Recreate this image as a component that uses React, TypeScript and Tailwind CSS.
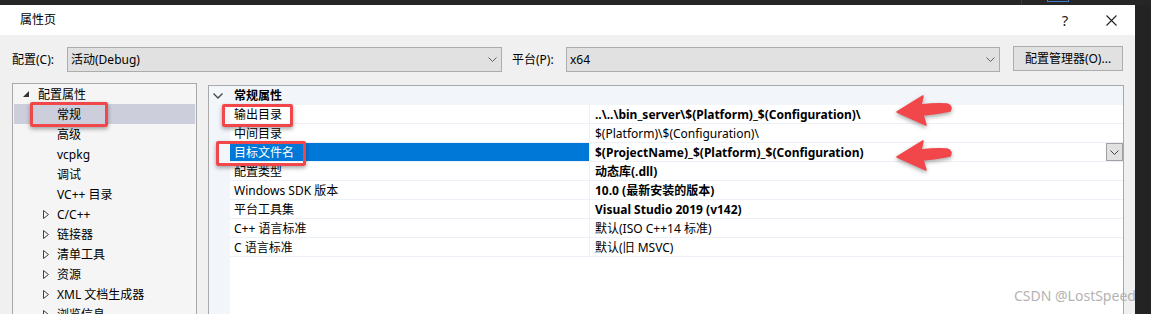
import React from "react";

const Chevron = ({ className = "" }: { className?: string }) => (
  <svg width="9" height="5" viewBox="0 0 9 5" className={className}>
    <polyline points="0.5,0.5 4.5,4.5 8.5,0.5" fill="none" stroke="#606060" strokeWidth="1" />
  </svg>
);

const Expander = () => (
  <svg width="6" height="9" viewBox="0 0 6 9" className="shrink-0">
    <polygon points="0.5,0.5 5.5,4.5 0.5,8.5" fill="none" stroke="#404040" strokeWidth="1" />
  </svg>
);

const RedArrow = ({ className }: { className: string }) => (
  <svg width="58" height="32" viewBox="0 0 58 32" className={className}>
    <path
      d="M1,17 L27,1 L25,10 Q40,8 51,9 Q57,11 54,16 Q40,19 27,20 L30,30 Z"
      fill="#f2474a"
      stroke="#f2474a"
      strokeWidth="1.5"
      strokeLinejoin="round"
    />
  </svg>
);

const treeChildren: { label: string; expand: boolean; selected?: boolean }[] = [
  { label: "常规", expand: false, selected: true },
  { label: "高级", expand: false },
  { label: "vcpkg", expand: false },
  { label: "调试", expand: false },
  { label: "VC++ 目录", expand: false },
  { label: "C/C++", expand: true },
  { label: "链接器", expand: true },
  { label: "清单工具", expand: true },
  { label: "资源", expand: true },
  { label: "XML 文档生成器", expand: true },
  { label: "浏览信息", expand: true },
];

const props: { name: string; value: string; bold: boolean; selected?: boolean }[] = [
  { name: "输出目录", value: "..\\..\\bin_server\\$(Platform)_$(Configuration)\\", bold: true },
  { name: "中间目录", value: "$(Platform)\\$(Configuration)\\", bold: false },
  { name: "目标文件名", value: "$(ProjectName)_$(Platform)_$(Configuration)", bold: true, selected: true },
  { name: "配置类型", value: "动态库(.dll)", bold: true },
  { name: "Windows SDK 版本", value: "10.0 (最新安装的版本)", bold: true },
  { name: "平台工具集", value: "Visual Studio 2019 (v142)", bold: true },
  { name: "C++ 语言标准", value: "默认(ISO C++14 标准)", bold: false },
  { name: "C 语言标准", value: "默认(旧 MSVC)", bold: false },
];

export default function App() {
  return (
    <div className="relative w-[1151px] h-[314px] overflow-hidden bg-[#242424] font-['Noto_Sans','Noto_Sans_CJK_SC',sans-serif] text-[12px] text-black leading-none">
      {/* top dark strip */}
      <div className="relative h-[5px] bg-[#262626]">
        <div className="absolute left-[1021px] top-0 h-[5px] w-px bg-[#3a3a3a]" />
        <div className="absolute left-[1047px] top-[-1px] h-[3px] w-[22px] border border-[#3d7cc9]" />
      </div>
      <div className="flex h-[309px]">
        {/* dialog */}
        <div className="relative w-[1135px] h-full flex flex-col bg-[#f0f0f0] overflow-hidden">
          {/* title bar */}
          <div className="h-[30px] bg-white flex items-center shrink-0">
            <span className="ml-[20px]">属性页</span>
            <span className="ml-auto text-[15px] text-[#222] w-[10px] text-center">?</span>
            <svg width="11" height="11" viewBox="0 0 11 11" className="ml-[36px] mr-[18px]">
              <path d="M0.5,0.5 L10.5,10.5 M10.5,0.5 L0.5,10.5" stroke="#222" strokeWidth="1.1" />
            </svg>
          </div>

          {/* config row */}
          <div className="h-[48px] shrink-0 flex items-start pt-[12px] pl-[12px]">
            <div className="w-[55px] h-[25px] flex items-center pt-[1px]">配置(C):</div>
            <div className="w-[435px] h-[25px] bg-[#e1e1e1] border border-[#acacac] flex items-center pl-[3px] pr-[4px]">
              <span className="pt-[1px]">活动(Debug)</span>
              <Chevron className="ml-auto" />
            </div>
            <div className="ml-[10px] w-[54px] h-[25px] flex items-center pt-[1px]">平台(P):</div>
            <div className="w-[434px] h-[25px] bg-[#e1e1e1] border border-[#acacac] flex items-center pl-[3px] pr-[4px]">
              <span className="pt-[1px]">x64</span>
              <Chevron className="ml-auto" />
            </div>
            <div className="ml-[13px] mt-[-1px] w-[110px] h-[25px] bg-[#e1e1e1] border border-[#adadad] flex items-center justify-center">
              配置管理器(O)...
            </div>
          </div>

          {/* panels */}
          <div className="flex flex-1 min-h-0">
            {/* tree */}
            <div className="ml-[12px] w-[185px] h-[260px] border border-[#a9a9a9] bg-[#f5f5f5] flex flex-col">
              <div className="h-[20px] flex items-center pl-[10px]">
                <svg width="6" height="6" viewBox="0 0 6 6" className="shrink-0">
                  <polygon points="0,6 6,6 6,0" fill="#333" />
                </svg>
                <span className="ml-[9px] pt-[1px]">配置属性</span>
              </div>
              {treeChildren.map((t) => (
                <div
                  key={t.label}
                  className={
                    "h-[20px] flex items-center mx-[1px] " +
                    (t.selected ? "bg-[#cccedb] " : "") +
                    (t.expand ? "pl-[29px]" : "pl-[43px]")
                  }
                >
                  {t.expand && <Expander />}
                  <span className={"pt-[1px] " + (t.expand ? "ml-[8px]" : "")}>{t.label}</span>
                </div>
              ))}
            </div>

            {/* property grid */}
            <div className="ml-[11px] mt-[2px] w-[916px] h-[260px] border border-[#a9a9a9] bg-white flex flex-col">
              <div className="h-[19px] bg-[#f2f5fa] flex items-center">
                <svg width="10" height="6" viewBox="0 0 10 6" className="ml-[4px]">
                  <polyline points="0.5,0.5 5,5 9.5,0.5" fill="none" stroke="#444" strokeWidth="1.3" />
                </svg>
                <span className="ml-[11px] font-bold pt-[1px]">常规属性</span>
              </div>
              <div className="flex flex-1">
                <div className="w-[21px] bg-[#f2f5fa]" />
                <div className="flex-1 flex flex-col">
                  {props.map((p) => (
                    <div key={p.name} className="h-[19px] flex border-b border-[#edf0f6]">
                      <div
                        className={
                          "w-[359px] flex items-center pl-[4px] pt-[1px] " +
                          (p.selected ? "bg-[#0078d7] text-white" : "")
                        }
                      >
                        {p.name}
                      </div>
                      <div className="w-px bg-[#edf0f6]" />
                      <div className={"flex-1 flex items-center pl-[5px] " + (p.bold ? "font-bold" : "")}>
                        <span className="pt-[1px]">{p.value}</span>
                        {p.selected && (
                          <div className="ml-auto w-[17px] h-[18px] bg-[#e1e1e1] border border-[#a0a0a0] flex items-center justify-center">
                            <svg width="9" height="5" viewBox="0 0 9 5">
                              <polyline points="0.5,0.5 4.5,4.5 8.5,0.5" fill="none" stroke="#444" strokeWidth="1" />
                            </svg>
                          </div>
                        )}
                      </div>
                    </div>
                  ))}
                </div>
              </div>
            </div>
          </div>

          {/* annotations */}
          <div className="absolute left-[30px] top-[97px] w-[78px] h-[25px] border-[3px] border-[#f2474a] rounded-[2px] shadow-[0_2px_4px_rgba(0,0,0,0.35)]" />
          <div className="absolute left-[222px] top-[99px] w-[71px] h-[23px] border-[3px] border-[#f2474a] rounded-[2px] shadow-[0_2px_4px_rgba(0,0,0,0.35)]" />
          <div className="absolute left-[216px] top-[136px] w-[90px] h-[25px] border-[3px] border-[#f2474a] rounded-[2px] shadow-[0_2px_4px_rgba(0,0,0,0.35)]" />
          <RedArrow className="absolute left-[896px] top-[90px] drop-shadow-[0_2px_2px_rgba(0,0,0,0.35)]" />
          <RedArrow className="absolute left-[896px] top-[135px] drop-shadow-[0_2px_2px_rgba(0,0,0,0.35)]" />
          <div className="absolute left-[1014px] top-[284px] text-[14px] text-[#b3b3b3] whitespace-nowrap">CSDN @LostSpeed</div>
        </div>
        <div className="flex-1 bg-[#232323]" />
      </div>
    </div>
  );
}
